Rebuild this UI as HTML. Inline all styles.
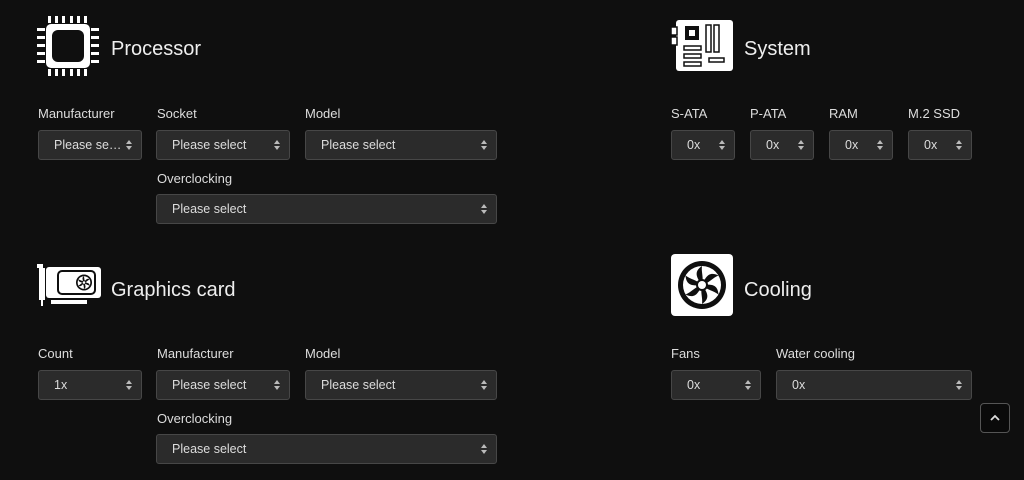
<!DOCTYPE html><html><head><style>
body{margin:0;width:1024px;height:480px;background:#0f0f0f;font-family:"Liberation Sans",sans-serif;color:#ddd;position:relative;overflow:hidden}
.a{position:absolute}
.h{font-size:20px;color:#eee}
.l{font-size:13px;color:#ddd}
.s{position:absolute;background:#2b2b2b;border:1px solid #474747;border-radius:3px;box-sizing:border-box;height:30px;font-size:12.5px;color:#ddd;line-height:28px;padding-left:15px}
.s:after{content:"";position:absolute;right:9px;top:9px;width:0;height:0;border-left:3px solid transparent;border-right:3px solid transparent;border-bottom:4px solid #bbb}
.s:before{content:"";position:absolute;right:9px;top:15px;width:0;height:0;border-left:3px solid transparent;border-right:3px solid transparent;border-top:4px solid #bbb}
</style></head><body>
<svg class="a" style="left:36px;top:14px" width="64" height="64" viewBox="0 0 64 64" fill="#fff">
<rect x="10" y="10" width="44" height="44" rx="5"/><rect x="16" y="16" width="32" height="32" rx="6" fill="#0f0f0f"/>
<g><rect x="12" y="2" width="3" height="7"/><rect x="19" y="2" width="3" height="7"/><rect x="26" y="2" width="3" height="7"/><rect x="34" y="2" width="3" height="7"/><rect x="41" y="2" width="3" height="7"/><rect x="48" y="2" width="3" height="7"/>
<rect x="12" y="55" width="3" height="7"/><rect x="19" y="55" width="3" height="7"/><rect x="26" y="55" width="3" height="7"/><rect x="34" y="55" width="3" height="7"/><rect x="41" y="55" width="3" height="7"/><rect x="48" y="55" width="3" height="7"/>
<rect x="1" y="14" width="8" height="3"/><rect x="1" y="22" width="8" height="3"/><rect x="1" y="30" width="8" height="3"/><rect x="1" y="38" width="8" height="3"/><rect x="1" y="46" width="8" height="3"/>
<rect x="55" y="14" width="8" height="3"/><rect x="55" y="22" width="8" height="3"/><rect x="55" y="30" width="8" height="3"/><rect x="55" y="38" width="8" height="3"/><rect x="55" y="46" width="8" height="3"/></g></svg>
<div class="a h" style="left:111px;top:38px">Processor</div>
<div class="a l" style="left:38px;top:106px">Manufacturer</div>
<div class="a l" style="left:157px;top:106px">Socket</div>
<div class="a l" style="left:305px;top:106px">Model</div>
<div class="s" style="left:38px;top:130px;width:104px">Please se…</div>
<div class="s" style="left:156px;top:130px;width:134px">Please select</div>
<div class="s" style="left:305px;top:130px;width:192px">Please select</div>
<div class="a l" style="left:157px;top:171px">Overclocking</div>
<div class="s" style="left:156px;top:194px;width:341px">Please select</div>

<svg class="a" style="left:671px;top:20px" width="62" height="51" viewBox="0 0 62 51">
<rect x="5" y="0" width="57" height="51" rx="3" fill="#fff"/><rect x="0" y="7" width="6" height="8" fill="#fff" stroke="#0f0f0f" stroke-width="1.5"/><rect x="0" y="17" width="6" height="8" fill="#fff" stroke="#0f0f0f" stroke-width="1.5"/>
<rect x="14" y="6" width="14" height="14" fill="#0f0f0f"/><rect x="18" y="10" width="6" height="6" fill="#fff"/>
<rect x="35" y="5" width="5" height="27" fill="none" stroke="#0f0f0f" stroke-width="1.5"/><rect x="43" y="5" width="5" height="27" fill="none" stroke="#0f0f0f" stroke-width="1.5"/>
<rect x="13" y="26" width="17" height="4" fill="none" stroke="#0f0f0f" stroke-width="1.5"/><rect x="13" y="34" width="17" height="4" fill="none" stroke="#0f0f0f" stroke-width="1.5"/><rect x="13" y="42" width="17" height="4" fill="none" stroke="#0f0f0f" stroke-width="1.5"/><rect x="38" y="38" width="15" height="4" fill="none" stroke="#0f0f0f" stroke-width="1.5"/></svg>
<div class="a h" style="left:744px;top:38px">System</div>
<div class="a l" style="left:671px;top:106px">S-ATA</div>
<div class="a l" style="left:750px;top:106px">P-ATA</div>
<div class="a l" style="left:829px;top:106px">RAM</div>
<div class="a l" style="left:908px;top:106px">M.2 SSD</div>
<div class="s" style="left:671px;top:130px;width:64px">0x</div>
<div class="s" style="left:750px;top:130px;width:64px">0x</div>
<div class="s" style="left:829px;top:130px;width:64px">0x</div>
<div class="s" style="left:908px;top:130px;width:64px">0x</div>

<svg class="a" style="left:37px;top:262px" width="64" height="46" viewBox="0 0 64 46" fill="#fff">
<path d="M0 2h6v4h2v32h-2v6h-2v-6h-2V6H0z"/><rect x="9" y="5" width="55" height="31" rx="3"/><rect x="14" y="38" width="36" height="4"/>
<rect x="21" y="9" width="37" height="23" rx="4" fill="none" stroke="#0f0f0f" stroke-width="2"/>
<circle cx="47" cy="20.5" r="8" fill="#0f0f0f"/><circle cx="47" cy="20.5" r="6.3" fill="#fff"/>
<g fill="#0f0f0f"><path id="g" d="M47 20.5C45 17 45 15 47 14.2C47 16 48 18 47 20.5z"/>
<use href="#g" transform="rotate(60 47 20.5)"/><use href="#g" transform="rotate(120 47 20.5)"/><use href="#g" transform="rotate(180 47 20.5)"/><use href="#g" transform="rotate(240 47 20.5)"/><use href="#g" transform="rotate(300 47 20.5)"/></g>
<circle cx="47" cy="20.5" r="1.8" fill="#fff" stroke="#0f0f0f"/></svg>
<div class="a h" style="left:111px;top:279px">Graphics card</div>
<div class="a l" style="left:38px;top:346px">Count</div>
<div class="a l" style="left:157px;top:346px">Manufacturer</div>
<div class="a l" style="left:305px;top:346px">Model</div>
<div class="s" style="left:38px;top:370px;width:104px">1x</div>
<div class="s" style="left:156px;top:370px;width:134px">Please select</div>
<div class="s" style="left:305px;top:370px;width:192px">Please select</div>
<div class="a l" style="left:157px;top:411px">Overclocking</div>
<div class="s" style="left:156px;top:434px;width:341px">Please select</div>

<svg class="a" style="left:671px;top:254px" width="62" height="62" viewBox="0 0 62 62">
<rect width="62" height="62" rx="4" fill="#fff"/><circle cx="31" cy="31" r="24" fill="#0f0f0f"/><circle cx="31" cy="31" r="19" fill="#fff"/>
<g fill="#0f0f0f"><path id="b" d="M31 31C26 24 22 18 31 12C30 18 33 24 31 31z"/>
<use href="#b" transform="rotate(60 31 31)"/><use href="#b" transform="rotate(120 31 31)"/><use href="#b" transform="rotate(180 31 31)"/><use href="#b" transform="rotate(240 31 31)"/><use href="#b" transform="rotate(300 31 31)"/></g>
<circle cx="31" cy="31" r="6" fill="#0f0f0f"/><circle cx="31" cy="31" r="4" fill="#fff"/></svg>
<div class="a h" style="left:744px;top:279px">Cooling</div>
<div class="a l" style="left:671px;top:346px">Fans</div>
<div class="a l" style="left:776px;top:346px">Water cooling</div>
<div class="s" style="left:671px;top:370px;width:90px">0x</div>
<div class="s" style="left:776px;top:370px;width:196px">0x</div>

<div class="a" style="left:980px;top:403px;width:30px;height:30px;box-sizing:border-box;border:1px solid #555;border-radius:4px;background:#0a0a0a">
<svg width="28" height="28" viewBox="0 0 28 28"><path d="M10 16l4-4 4 4" fill="none" stroke="#ddd" stroke-width="1.8"/></svg></div>
</body></html>
